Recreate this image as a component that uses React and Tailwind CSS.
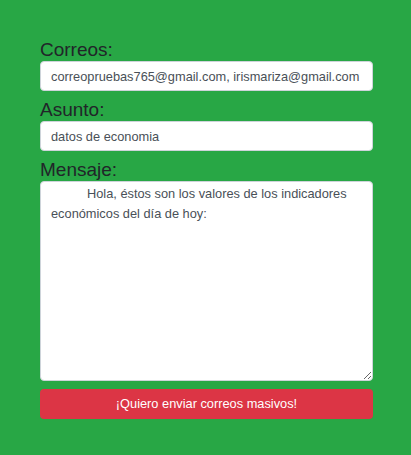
export default function App() {
  return (
    <div className="w-[411px] h-[455px] bg-[#28a745] font-['Liberation_Sans',Arial,sans-serif]">
      <form className="flex flex-col w-[333px] ml-[40px] pt-[38px]" onSubmit={(e) => e.preventDefault()}>
        <label className="text-[19px] leading-[23px] text-[#212529]">Correos:</label>
        <input
          className="h-[30px] rounded-[4px] border border-[#ced4da] bg-white pl-[10px] text-[12.8px] text-[#495057] outline-none"
          defaultValue="correopruebas765@gmail.com, irismariza@gmail.com"
        />
        <label className="mt-[7px] text-[19px] leading-[23px] text-[#212529]">Asunto:</label>
        <input
          className="h-[30px] rounded-[4px] border border-[#ced4da] bg-white pl-[10px] text-[12.8px] text-[#495057] outline-none"
          defaultValue="datos de economia"
        />
        <label className="mt-[7px] text-[19px] leading-[23px] text-[#212529]">Mensaje:</label>
        <textarea
          className="h-[200px] rounded-[4px] border border-[#ced4da] bg-white px-[10px] py-[2px] text-[12.8px] leading-[20px] text-[#495057] indent-[36px] outline-none"
          defaultValue="Hola, éstos son los valores de los indicadores económicos del día de hoy:"
        />
        <button className="mt-[8px] h-[30px] rounded-[4px] bg-[#dc3545] text-[12.8px] text-white">
          ¡Quiero enviar correos masivos!
        </button>
      </form>
    </div>
  )
}
